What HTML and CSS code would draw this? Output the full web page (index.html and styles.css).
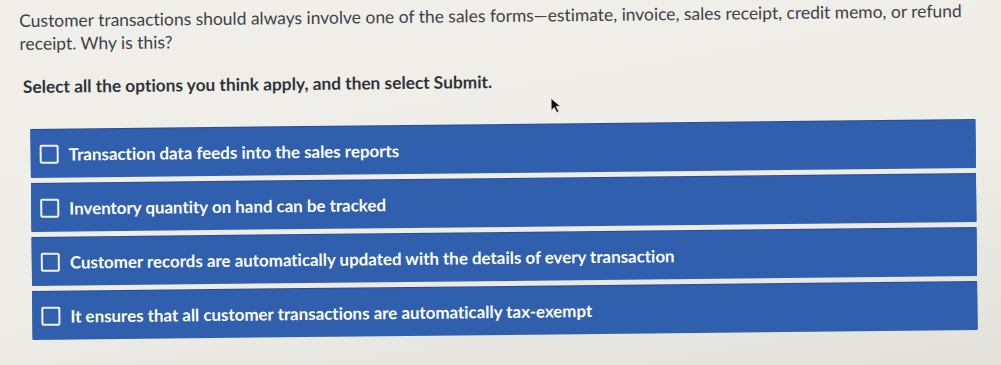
FILE: index.html
```html
<!DOCTYPE html>
<html>
<head>
<meta charset="utf-8">
<link rel="stylesheet" href="styles.css">
</head>
<body>
<div class="page">
  <p class="question">Customer transactions should always involve one of the sales forms—estimate, invoice, sales receipt, credit memo, or refund receipt. Why is this?</p>
  <p class="instruction">Select all the options you think apply, and then select Submit.</p>
  <div class="options">
    <label class="option"><span class="box"></span><span class="label">Transaction data feeds into the sales reports</span></label>
    <label class="option"><span class="box"></span><span class="label">Inventory quantity on hand can be tracked</span></label>
    <label class="option"><span class="box"></span><span class="label">Customer records are automatically updated with the details of every transaction</span></label>
    <label class="option"><span class="box"></span><span class="label">It ensures that all customer transactions are automatically tax-exempt</span></label>
  </div>
  <svg class="cursor" width="12" height="16" viewBox="0 0 12 16"><path d="M1 1 L1 13 L4 10 L6.5 15 L8.5 14 L6 9 L10 9 Z" fill="#111" stroke="#eee" stroke-width="0.6"/></svg>
</div>
</body>
</html>
```
FILE: styles.css
```css
html, body {
  margin: 0;
  padding: 0;
}
body {
  background: linear-gradient(170deg, #f0efea 0%, #eeede8 55%, #e2e1db 100%);
  font-family: Lato, "Open Sans", sans-serif;
  font-variant-ligatures: none;
  color: #3d4148;
  width: 1001px;
  height: 365px;
  overflow: hidden;
}
.page {
  position: relative;
  box-sizing: border-box;
  height: 365px;
  padding: 4px 20px 0 21px;
  transform: rotate(-0.6deg);
  transform-origin: 500px 182px;
}
.question {
  margin: 0;
  font-size: 17.45px;
  line-height: 23px;
  width: 965px;
}
.instruction {
  margin: 20px 0 0 3px;
  font-size: 17.3px;
  line-height: 24px;
  font-weight: 700;
  color: #2f333a;
}
.options {
  display: flex;
  flex-direction: column;
  gap: 6px;
  margin: 31px 0 0 10px;
  width: 945px;
}
.option {
  display: flex;
  align-items: center;
  height: 48px;
  background: #2f5fad;
  padding-left: 9px;
  gap: 10px;
  box-shadow: 0 -1px 0 #284f92;
}
.box {
  width: 15px;
  height: 15px;
  border: 2px solid #f2f4f8;
  border-radius: 2px;
  flex: none;
}
.label {
  color: #ffffff;
  font-size: 16.9px;
  font-weight: 700;
}
.cursor {
  position: absolute;
  left: 551px;
  top: 98px;
}
```
